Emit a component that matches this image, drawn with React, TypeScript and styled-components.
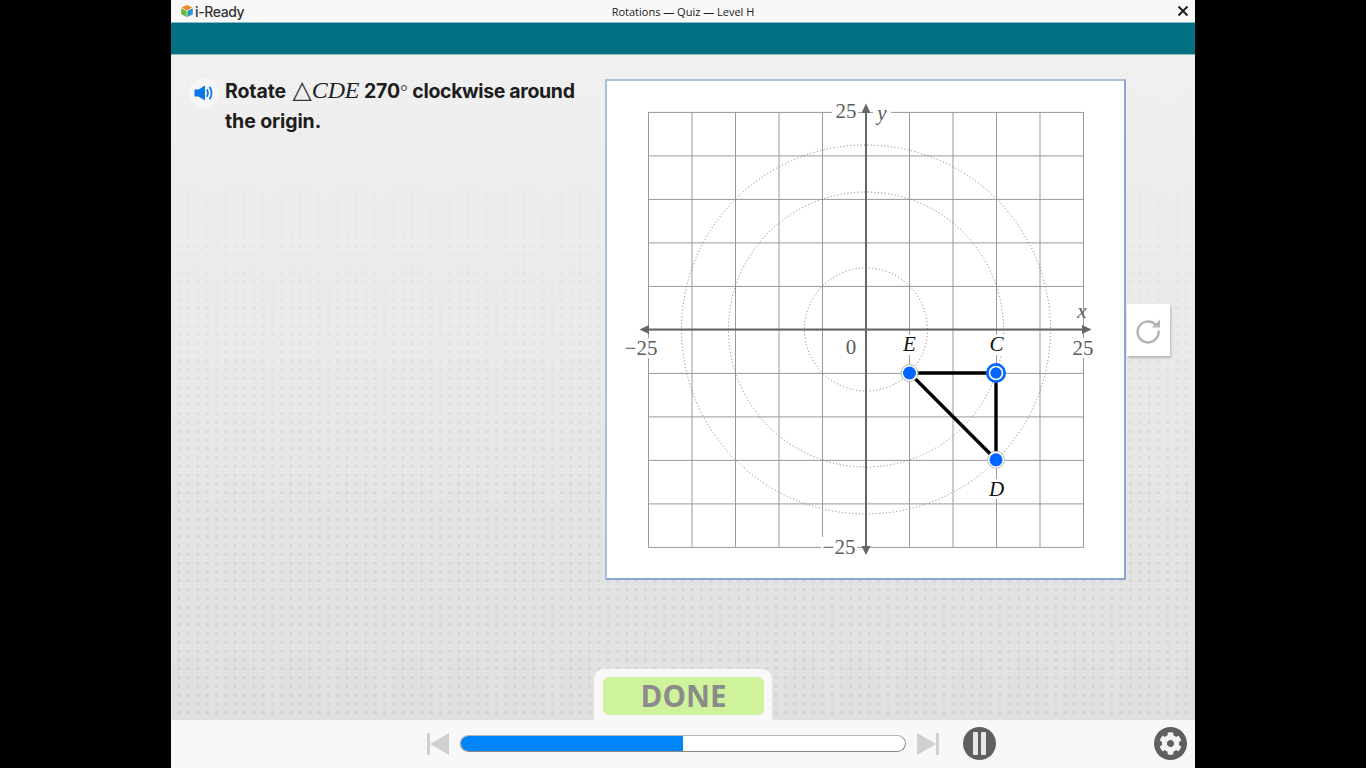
import React from "react";
import styled, { createGlobalStyle } from "styled-components";
import { FaCog } from "react-icons/fa";

const GRID_X = 648.5;
const GRID_Y = 112.4;
const CELL = 43.5;
const ORIGIN = { x: 866, y: 329.5 };
const E = { x: 909.5, y: 373 };
const C = { x: 996, y: 373 };
const D = { x: 996, y: 459.8 };
const RADII = [61.5, 137.5, 184.5];

const GlobalStyle = createGlobalStyle`
  html, body {
    margin: 0;
    height: 100%;
    background: #000;
    overflow: hidden;
  }
  #root {
    height: 100%;
  }
`;

const Stage = styled.div`
  width: 1024px;
  height: 768px;
  margin: 0 auto;
  display: flex;
  flex-direction: column;
  font-family: "Open Sans", sans-serif;
`;

const TitleBar = styled.header`
  height: 22px;
  flex: none;
  background: #f8f8f8;
  display: flex;
  align-items: center;
  justify-content: space-between;
  padding: 0 6px 0 9px;
  box-sizing: border-box;
  position: relative;
`;

const Logo = styled.div`
  display: flex;
  align-items: center;
  gap: 1px;
  font-family: "Inter", sans-serif;
  font-size: 14px;
  font-weight: 500;
  letter-spacing: -0.4px;
  color: #333;
`;

const Title = styled.div`
  position: absolute;
  left: 0;
  right: 0;
  top: 4px;
  text-align: center;
  font-size: 11px;
  line-height: 15px;
  color: #222;
  pointer-events: none;
`;

const CloseButton = styled.svg`
  width: 12px;
  height: 12px;
  stroke: #222;
  stroke-width: 2;
  fill: none;
`;

const Band = styled.div`
  height: 33px;
  flex: none;
  box-sizing: border-box;
  background: #027083;
  border-top: 1px solid #8fbac2;
  border-bottom: 1px solid #8fbac2;
`;

const Content = styled.main`
  flex: 1;
  position: relative;
  display: flex;
  align-items: flex-start;
  padding: 24px 0 0 17px;
  box-sizing: border-box;
  background-color: #e6e6e6;
  background-image:
    linear-gradient(180deg, rgba(240, 240, 240, 0.85) 0%, rgba(236, 236, 236, 0.5) 35%, rgba(228, 228, 228, 0) 70%),
    radial-gradient(circle at center, rgba(120, 120, 120, 0.14) 1.2px, transparent 2px),
    linear-gradient(180deg, #f0f0f0 0%, #e8e8e8 45%, #e0e0e0 100%);
  background-size: 100% 100%, 9.33px 8.8px, 100% 100%;
  background-position: 0 0, 2.4px 2.4px, 0 0;
  border-left: 1px solid #f0f0f0;
`;

const Question = styled.section`
  width: 416px;
  flex: none;
  display: flex;
  align-items: flex-start;
  gap: 6px;
`;

const SpeakerButton = styled.div`
  width: 30px;
  height: 30px;
  margin-top: -1px;
  flex: none;
  border-radius: 50%;
  background: #f6f6f6;
  display: flex;
  align-items: center;
  justify-content: center;
`;

const Prompt = styled.p`
  margin: -3px 0 0;
  width: 372px;
  font-family: "Inter", sans-serif;
  font-weight: 700;
  font-size: 19.5px;
  line-height: 30px;
  letter-spacing: -0.1px;
  color: #1d1d1d;
`;

const MathText = styled.span`
  font-family: "Liberation Serif", serif;
  font-style: italic;
  font-weight: 400;
  font-size: 24px;
  line-height: 0;
  color: #222;
`;

const Triangle = styled.span`
  margin-left: 2px;
  font-family: "DejaVu Sans", sans-serif;
  font-weight: 400;
  font-size: 25px;
  line-height: 0;
  color: #333;
`;

const Degree = styled.span`
  font-family: "Liberation Serif", serif;
  font-weight: 400;
  line-height: 0;
  color: #444;
`;

const TightWords = styled.span`
  letter-spacing: -0.35px;
`;

const GraphCard = styled.section`
  width: 521px;
  height: 501px;
  flex: none;
  box-sizing: border-box;
  background: #fff;
  border: 2px solid #8ba6cf;
  border-top-color: #a9bfdf;
  border-left-color: #a9bfdf;
`;

const Graph = styled.svg`
  display: block;
  width: 517px;
  height: 497px;
`;

const AxisLabel = styled.text`
  font-family: "Liberation Serif", serif;
  font-size: 21px;
  fill: #5c5c5c;
  text-anchor: middle;
`;

const PointLabel = styled.text`
  font-family: "Liberation Serif", serif;
  font-style: italic;
  font-size: 21px;
  fill: #111;
  text-anchor: middle;
`;

const ResetButton = styled.div`
  width: 43px;
  height: 52px;
  margin: 225px 0 0 1px;
  flex: none;
  background: #fff;
  box-shadow: 1px 2px 2px rgba(0, 0, 0, 0.22);
  display: flex;
  align-items: center;
  justify-content: center;
  padding-right: 2px;
  box-sizing: border-box;
`;

const DoneTab = styled.div`
  position: absolute;
  left: 422px;
  bottom: 0;
  width: 178px;
  height: 51px;
  box-sizing: border-box;
  padding: 8px 8px 0 9px;
  background: #f8f8f8;
  border-radius: 10px 10px 0 0;
`;

const DoneButton = styled.div`
  height: 38px;
  border-radius: 6px;
  background: #cff29d;
  color: #8b8b8b;
  font-weight: 700;
  font-size: 29.5px;
  line-height: 38px;
  text-align: center;
`;

const Footer = styled.footer`
  height: 48px;
  flex: none;
  background: #f8f8f8;
  display: flex;
  align-items: center;
  padding: 0 8px 1px 256px;
  box-sizing: border-box;
`;

const StepIcon = styled.svg`
  width: 22px;
  height: 22px;
  flex: none;
  fill: #d0d0d0;
`;

const ProgressTrack = styled.div`
  width: 446px;
  height: 17px;
  margin: 0 11px;
  flex: none;
  box-sizing: border-box;
  border: 1px solid #8a8a8a;
  border-top-color: #b5b5b5;
  border-radius: 9px;
  background: #fff;
  overflow: hidden;
`;

const ProgressFill = styled.div<{ $percent: number }>`
  width: ${(props) => props.$percent}%;
  height: 100%;
  background: #0186f9;
`;

const PauseButton = styled.div`
  width: 33px;
  height: 33px;
  margin-left: 24px;
  flex: none;
  border-radius: 50%;
  background: #5e5f5e;
  display: flex;
  align-items: center;
  justify-content: center;
  gap: 3px;

  i {
    display: block;
    width: 5px;
    height: 23px;
    border-radius: 1px;
    background: #e8e8e8;
  }
`;

const SettingsButton = styled.div`
  width: 33px;
  height: 33px;
  margin-left: auto;
  flex: none;
  border-radius: 50%;
  background: #5e5f5e;
  color: #f4f4f4;
  display: flex;
  align-items: center;
  justify-content: center;
  font-size: 23px;
`;

function BlockLogo() {
  return (
    <svg width="14" height="14" viewBox="0 0 14 14">
      <path d="M7 1 L12.5 3.6 L7 6.4 L1.5 3.6 Z" fill="#f08a24" />
      <path d="M1.2 4.2 L6.6 7 L6.6 13 L1.2 10.2 Z" fill="#6cb83a" />
      <path d="M12.8 4.2 L7.4 7 L7.4 13 L12.8 10.2 Z" fill="#1f9ac9" />
    </svg>
  );
}

function GraphPlot() {
  const cols = Array.from({ length: 11 }, (_, i) => GRID_X + i * CELL);
  const rows = Array.from({ length: 11 }, (_, i) => GRID_Y + i * CELL);

  return (
    <Graph viewBox="607 81 517 497">
      {cols.map((x) => (
        <line key={x} x1={x} x2={x} y1={112} y2={547.5} stroke="#999" strokeWidth="1" />
      ))}
      {rows.map((y) => (
        <line key={y} x1={648} x2={1083.5} y1={y} y2={y} stroke="#999" strokeWidth="1" />
      ))}

      {RADII.map((r) => (
        <circle
          key={r}
          cx={ORIGIN.x}
          cy={ORIGIN.y}
          r={r}
          fill="none"
          stroke="#777"
          strokeWidth="1"
          strokeDasharray="1 2.4"
        />
      ))}

      {/* white patches behind the labels */}
      <rect x="832" y="102" width="26" height="20" fill="#fff" />
      <rect x="873" y="102" width="18" height="20" fill="#fff" />
      <rect x="821" y="537" width="36" height="20" fill="#fff" />
      <rect x="624" y="338" width="34" height="20" fill="#fff" />
      <rect x="1073" y="338" width="20" height="20" fill="#fff" />
      <rect x="843" y="337" width="16" height="20" fill="#fff" />
      <rect x="900" y="335" width="19" height="20" fill="#fff" />
      <rect x="987" y="335" width="19" height="20" fill="#fff" />
      <rect x="987" y="479" width="19" height="20" fill="#fff" />

      <line x1="646" x2="1085" y1={ORIGIN.y} y2={ORIGIN.y} stroke="#666" strokeWidth="2" />
      <line x1={ORIGIN.x} x2={ORIGIN.x} y1="110" y2="549" stroke="#666" strokeWidth="2" />
      <path d="M639.5 329.5 L649 325 L649 334 Z" fill="#666" />
      <path d="M1091.5 329.5 L1082 325 L1082 334 Z" fill="#666" />
      <path d="M866 103.5 L861.5 113 L870.5 113 Z" fill="#666" />
      <path d="M866 555 L861.5 546 L870.5 546 Z" fill="#666" />

      <AxisLabel x="846" y="118">25</AxisLabel>
      <AxisLabel x="839" y="554">−25</AxisLabel>
      <AxisLabel x="641" y="355">−25</AxisLabel>
      <AxisLabel x="1083" y="355">25</AxisLabel>
      <AxisLabel x="851" y="354">0</AxisLabel>
      <AxisLabel x="882" y="120" fontStyle="italic">y</AxisLabel>
      <AxisLabel x="1082" y="318" fontStyle="italic">x</AxisLabel>
      <PointLabel x={909.5} y={351}>E</PointLabel>
      <PointLabel x={996.5} y={351}>C</PointLabel>
      <PointLabel x={996.5} y={496}>D</PointLabel>

      <path
        d={`M${E.x} ${E.y} L${C.x} ${C.y} L${D.x} ${D.y} Z`}
        fill="none"
        stroke="#000"
        strokeWidth="3.4"
        strokeLinejoin="round"
      />

      <circle cx={E.x} cy={E.y} r="8.5" fill="#fff" stroke="#bbb" strokeWidth="1" />
      <circle cx={E.x} cy={E.y} r="6.5" fill="#0066ff" />
      <circle cx={D.x} cy={D.y} r="8.5" fill="#fff" stroke="#bbb" strokeWidth="1" />
      <circle cx={D.x} cy={D.y} r="6.5" fill="#0066ff" />
      <circle cx={C.x} cy={C.y} r="10" fill="#0066ff" />
      <circle cx={C.x} cy={C.y} r="6.5" fill="#0066ff" stroke="#fff" strokeWidth="1.6" />
    </Graph>
  );
}

function App() {
  return (
    <>
      <GlobalStyle />
      <Stage>
        <TitleBar>
          <Logo>
            <BlockLogo />
            <span>i-Ready</span>
          </Logo>
          <Title>Rotations — Quiz — Level H</Title>
          <CloseButton viewBox="0 0 12 12">
            <path d="M1.5 1.5 L10.5 10.5 M10.5 1.5 L1.5 10.5" />
          </CloseButton>
        </TitleBar>
        <Band />
        <Content>
          <Question>
            <SpeakerButton>
              <svg width="20" height="16" viewBox="0 0 20 16">
                <path d="M0.5 4.5 H4.5 L11 0.5 V15.5 L4.5 11.5 H0.5 Z" fill="#0b76e8" />
                <path
                  d="M13.2 5 Q14.6 8 13.2 11 M16 2.5 Q19 8 16 13.5"
                  fill="none"
                  stroke="#0b76e8"
                  strokeWidth="1.8"
                  strokeLinecap="round"
                />
              </svg>
            </SpeakerButton>
            <Prompt>
              Rotate <Triangle>△</Triangle>
              <MathText>CDE</MathText> 270<Degree>°</Degree> <TightWords>clockwise around</TightWords> the origin.
            </Prompt>
          </Question>
          <GraphCard>
            <GraphPlot />
          </GraphCard>
          <ResetButton>
            <svg width="28" height="28" viewBox="0 0 28 28">
              <path
                d="M21.5 8.5 A10.5 10.5 0 1 0 24.5 14.5"
                fill="none"
                stroke="#b4b4b4"
                strokeWidth="2.4"
              />
              <path d="M26 3.5 L26 11.5 L18 11.5 Z" fill="#b4b4b4" />
            </svg>
          </ResetButton>
          <DoneTab>
            <DoneButton>DONE</DoneButton>
          </DoneTab>
        </Content>
        <Footer>
          <StepIcon viewBox="0 0 22 22">
            <rect x="0" y="0" width="3" height="22" />
            <path d="M22 0 V22 L3 11 Z" />
          </StepIcon>
          <ProgressTrack>
            <ProgressFill $percent={50} />
          </ProgressTrack>
          <StepIcon viewBox="0 0 22 22">
            <rect x="19" y="0" width="3" height="22" />
            <path d="M0 0 V22 L19 11 Z" />
          </StepIcon>
          <PauseButton>
            <i />
            <i />
          </PauseButton>
          <SettingsButton>
            <FaCog />
          </SettingsButton>
        </Footer>
      </Stage>
    </>
  );
}

export default App;
